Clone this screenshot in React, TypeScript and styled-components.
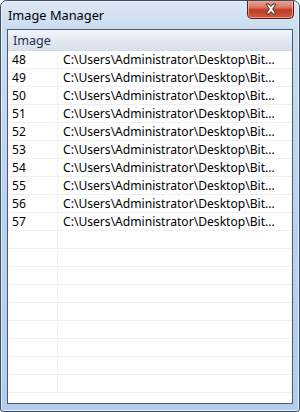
import React from "react";
import styled, { createGlobalStyle } from "styled-components";

const Global = createGlobalStyle`
  html, body { margin: 0; padding: 0; background: #ffffff; }
  body { font-family: "Noto Sans", "Liberation Sans", sans-serif; }
`;

const Window = styled.div`
  box-sizing: border-box;
  width: 300px;
  height: 412px;
  border: 1px solid #3f4f61;
  border-radius: 7px 7px 3px 3px;
  background: linear-gradient(180deg, #dbe7f5 0px, #cadcf1 30px, #b9d2ef 200px, #b3cdee 100%);
  display: flex;
  flex-direction: column;
  overflow: hidden;
  box-shadow: inset 0 0 0 1px rgba(255,255,255,0.6);
`;

const TitleBar = styled.div`
  height: 28px;
  display: flex;
  align-items: flex-start;
  justify-content: space-between;
  flex-shrink: 0;
`;

const Title = styled.div`
  font-family: "Noto Sans", "Liberation Sans", sans-serif;
  font-size: 12.8px;
  color: #000;
  padding: 6px 0 0 7px;
  line-height: 17px;
`;

const CloseButton = styled.div`
  box-sizing: border-box;
  width: 47px;
  height: 19px;
  margin-right: 5px;
  margin-top: -1px;
  border: 1px solid #5b1d14;
  border-top: none;
  border-radius: 0 0 5px 5px;
  background: linear-gradient(180deg, #e9a99b 0%, #d97a65 40%, #c13c23 55%, #cc5a40 100%);
  box-shadow: inset 0 0 0 1px rgba(255, 210, 200, 0.55);
  display: flex;
  align-items: center;
  justify-content: center;
`;

const Client = styled.div`
  flex: 1;
  margin: 0 6px 7px 6px;
  border: 1px solid #4a5a6e;
  background: #ffffff;
  display: flex;
  flex-direction: column;
  overflow: hidden;
`;

const Header = styled.div`
  height: 21px;
  box-sizing: border-box;
  border-bottom: 1px solid #d5dbe3;
  background: linear-gradient(180deg, #f2f5fa 0%, #e3e9f3 50%, #d9e1ee 100%);
  display: flex;
  align-items: center;
  padding-left: 5px;
  font-size: 12.6px;
  color: #1e2f4a;
  flex-shrink: 0;
`;

const Row = styled.div`
  height: 18px;
  box-sizing: border-box;
  border-bottom: 1px solid #f0f0f0;
  display: grid;
  grid-template-columns: 50px 1fr;
  flex-shrink: 0;
  font-size: 12.1px;
  line-height: 17px;
  color: #000;
`;

const IdCell = styled.div`
  border-right: 1px solid #f0f0f0;
  padding-left: 4px;
  white-space: nowrap;
`;

const PathCell = styled.div`
  padding-left: 5px;
  white-space: nowrap;
  overflow: hidden;
`;

const ids = [48, 49, 50, 51, 52, 53, 54, 55, 56, 57];

export default function App() {
  const empty = Array.from({ length: 9 });
  return (
    <>
      <Global />
      <Window>
        <TitleBar>
          <Title>Image Manager</Title>
          <CloseButton>
            <svg width="14" height="12" viewBox="0 0 14 12">
              <path
                d="M2 1 L5 1 L7 3.5 L9 1 L12 1 L8.7 6 L12 11 L9 11 L7 8.5 L5 11 L2 11 L5.3 6 Z"
                fill="#ffffff"
                stroke="#4a2a24"
                strokeWidth="1"
                strokeLinejoin="round"
              />
            </svg>
          </CloseButton>
        </TitleBar>
        <Client>
          <Header>Image</Header>
          {ids.map((id) => (
            <Row key={id}>
              <IdCell>{id}</IdCell>
              <PathCell>C:\Users\Administrator\Desktop\Bit...</PathCell>
            </Row>
          ))}
          {empty.map((_, i) => (
            <Row key={"e" + i}>
              <IdCell />
              <PathCell />
            </Row>
          ))}
        </Client>
      </Window>
    </>
  );
}
